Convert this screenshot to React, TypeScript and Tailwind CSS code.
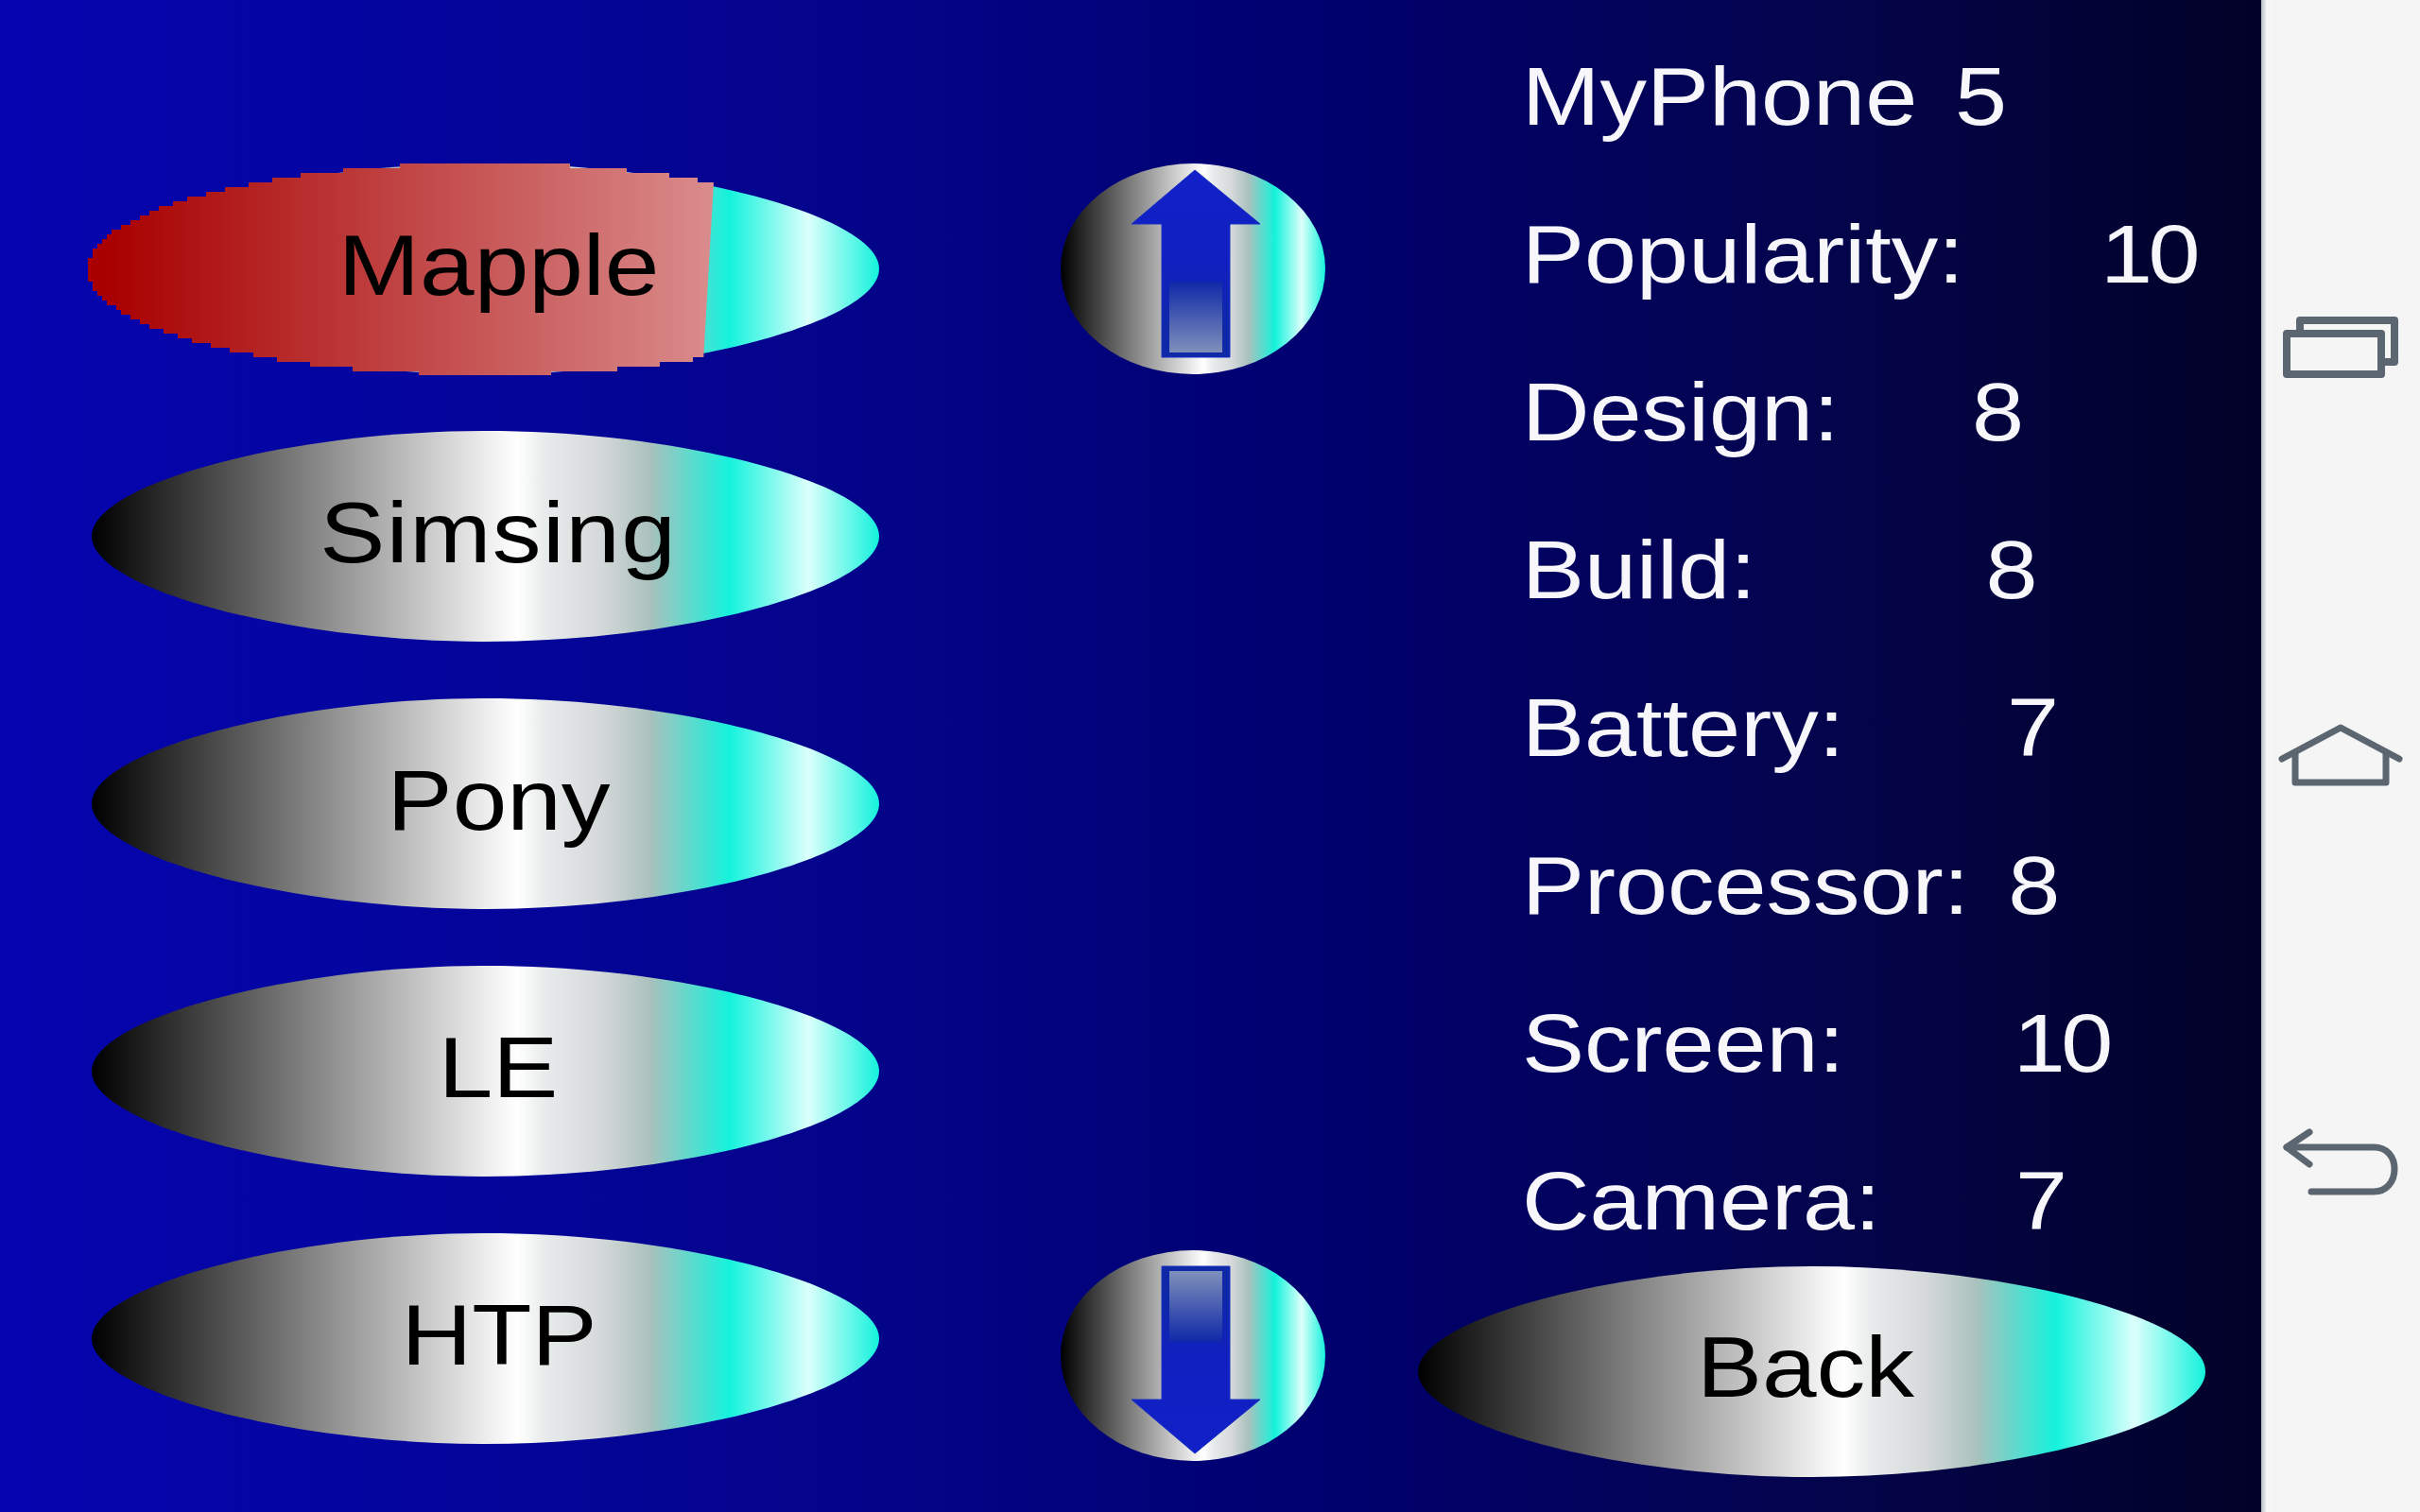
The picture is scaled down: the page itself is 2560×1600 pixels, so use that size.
const PHONES = [
  { name: 'Mapple', tracking: '' },
  { name: 'Simsing', tracking: 'tracking-[1.2px]' },
  { name: 'Pony', tracking: '' },
  { name: 'LE', tracking: '' },
  { name: 'HTP', tracking: '' },
]

const SPECS = [
  { label: 'MyPhone', value: '5', width: 'w-[407px]' },
  { label: 'Popularity:', value: '10', width: 'w-[544px]' },
  { label: 'Design:', value: '8', width: 'w-[423px]' },
  { label: 'Build:', value: '8', width: 'w-[436px]' },
  { label: 'Battery:', value: '7', width: 'w-[456px]' },
  { label: 'Processor:', value: '8', width: 'w-[457px]' },
  { label: 'Screen:', value: '10', width: 'w-[462px]' },
  { label: 'Camera:', value: '7', width: 'w-[464px]' },
]

const METAL =
  'bg-[linear-gradient(90deg,#000_0%,#fff_54%,#e8ebeb_57.6%,#d5d9d9_64.5%,#a9c1bd_71%,#14f2dc_81%,#dcfffb_91%,#14f2dc_100%)]'

// long ovals are a bit more pointed than a true ellipse
const LENS =
  "[clip-path:path('M0_111.5C0_55.75_208.25_0_416.5_0C624.75_0_833_55.75_833_111.5C833_167.25_624.75_223_416.5_223C208.25_223_0_167.25_0_111.5Z')]"

// the selected oval is a rough bitmap in the original, so its edge is stepped
function redOvalPath() {
  const cx = 420
  const cy = 112
  const rx = 420
  const ry = 112
  const step = 5
  const right: string[] = []
  const left: string[] = []
  for (let y = 0; y < 224; y += step) {
    const dy = Math.min(1, Math.abs(y + step / 2 - cy) / ry)
    const half = rx * Math.sqrt(1 - dy * dy)
    const xl = Math.round((cx - half) / step) * step
    let xr = Math.round((cx + half) / step) * step
    const cut = 663 - (y / 224) * 13
    if (xr > cut) xr = cut
    left.unshift(`L${xl} ${y + step}L${xl} ${y}`)
    right.push(`L${xr} ${y}L${xr} ${y + step}`)
  }
  return 'M' + right.join('').slice(1) + left.join('') + 'Z'
}

function PhoneButton({ name, tracking, selected }: { name: string; tracking: string; selected: boolean }) {
  return (
    <button className="relative flex h-[223px] w-[833px] items-center justify-center pl-[28px] pb-[8px]">
      <span className={`absolute inset-0 ${METAL} ${LENS}`} />
      {selected && (
        <svg className="absolute left-[-4px] top-0 h-[224px] w-[840px]" viewBox="0 0 840 224">
          <defs>
            <linearGradient id="red" gradientUnits="userSpaceOnUse" x1="20" y1="0" x2="663" y2="0">
              <stop offset="0" stopColor="#a80000" />
              <stop offset="1" stopColor="#da8c8c" />
            </linearGradient>
          </defs>
          <path d={redOvalPath()} fill="url(#red)" />
        </svg>
      )}
      <span className={`relative origin-center scale-x-[1.15] text-[90px] leading-[100px] text-black ${tracking}`}>{name}</span>
    </button>
  )
}

function ArrowButton({ down }: { down?: boolean }) {
  const id = down ? 'shaft-down' : 'shaft-up'
  return (
    <button className={`flex h-[223px] w-[280px] items-center justify-center rounded-[50%] ${METAL}`}>
      <svg className="h-[223px] w-[280px]" viewBox="0 0 280 223">
        <defs>
          <linearGradient id={id} x1="0" y1="0" x2="0" y2="1">
            <stop offset="0" stopColor="#1220c8" />
            <stop offset="0.5" stopColor="#1020c0" />
            <stop offset="0.85" stopColor="#0f28a8" />
            <stop offset="1" stopColor="#0f28a8" />
          </linearGradient>
          <linearGradient id={`${id}-in`} x1="0" y1="0" x2="0" y2="1">
            <stop offset="0" stopColor="#0f28a8" />
            <stop offset="1" stopColor="#7f90ba" />
          </linearGradient>
        </defs>
        <g transform={down ? 'translate(0 222) scale(1 -1)' : undefined}>
          <path d="M142 7L211 64H179V205H107V64H75Z" fill={`url(#${id})`} stroke="#1a30c0" strokeWidth="1" strokeLinejoin="round" />
          <rect x="115" y="125" width="56" height="75" fill={`url(#${id}-in)`} />
        </g>
      </svg>
    </button>
  )
}

function NavIcons() {
  return (
    <div className="flex flex-col items-center pt-[334px] text-[#5b6670]">
      <svg className="h-[66px] w-[122px]" viewBox="0 0 122 66" fill="none" stroke="currentColor" strokeWidth="8" strokeLinejoin="round">
        <rect x="18" y="5" width="100" height="44" />
        <rect x="4" y="19" width="100" height="43" fill="#f5f5f5" />
      </svg>
      <svg className="mt-[366px] h-[66px] w-[132px]" viewBox="0 0 132 66" fill="none" stroke="currentColor" strokeWidth="7" strokeLinecap="round" strokeLinejoin="round">
        <path d="M4 37L66 4L128 37" />
        <path d="M18 30V62H114V30" />
      </svg>
      <svg className="mt-[362px] h-[72px] w-[122px]" viewBox="0 0 122 72" fill="none" stroke="currentColor" strokeWidth="7" strokeLinecap="round" strokeLinejoin="round">
        <path d="M28 4L4 20L28 38" />
        <path d="M4 20H96C110 20 118 30 118 43C118 56 110 67 96 67H30" />
      </svg>
    </div>
  )
}

export default function App() {
  return (
    <div className="flex h-[1600px] w-[2560px] overflow-hidden font-['Liberation_Sans',Arial,sans-serif]">
      <main className="flex w-[2392px] bg-[linear-gradient(90deg,#0505b0_0%,#040488_40%,#00006c_60%,#04044e_80%,#020228_100%)] pl-[97px]">
        <div className="flex w-[833px] flex-col gap-[60px] pt-[173px]">
          {PHONES.map((phone, i) => (
            <PhoneButton key={phone.name} name={phone.name} tracking={phone.tracking} selected={i === 0} />
          ))}
        </div>

        <div className="ml-[192px] flex h-[1546px] w-[280px] flex-col justify-between pt-[173px]">
          <ArrowButton />
          <ArrowButton down />
        </div>

        <div className="ml-[98px] w-[832px] pt-[52px]">
          <div className="flex flex-col gap-[67px] pl-[110px] text-[88px] leading-[100px] text-[#f6f6fb]">
            {SPECS.map((row) => (
              <div key={row.label} className="flex origin-left scale-x-[1.125] whitespace-pre">
                <span className={row.width}>{row.label}</span>
                <span className="tracking-[-4px]">{row.value}</span>
              </div>
            ))}
          </div>
          <button className="relative mt-[19px] flex h-[223px] w-[833px] items-center justify-center pr-[12px] pb-[10px]">
            <span className={`absolute inset-0 ${METAL} ${LENS}`} />
            <span className="relative origin-center scale-x-[1.15] text-[90px] leading-[100px] text-black">Back</span>
          </button>
        </div>
      </main>

      <aside className="flex w-[168px] justify-center bg-[linear-gradient(90deg,#b8c0c4_0px,#f8f8f8_6px,#f5f5f5_12px)]">
        <NavIcons />
      </aside>
    </div>
  )
}
